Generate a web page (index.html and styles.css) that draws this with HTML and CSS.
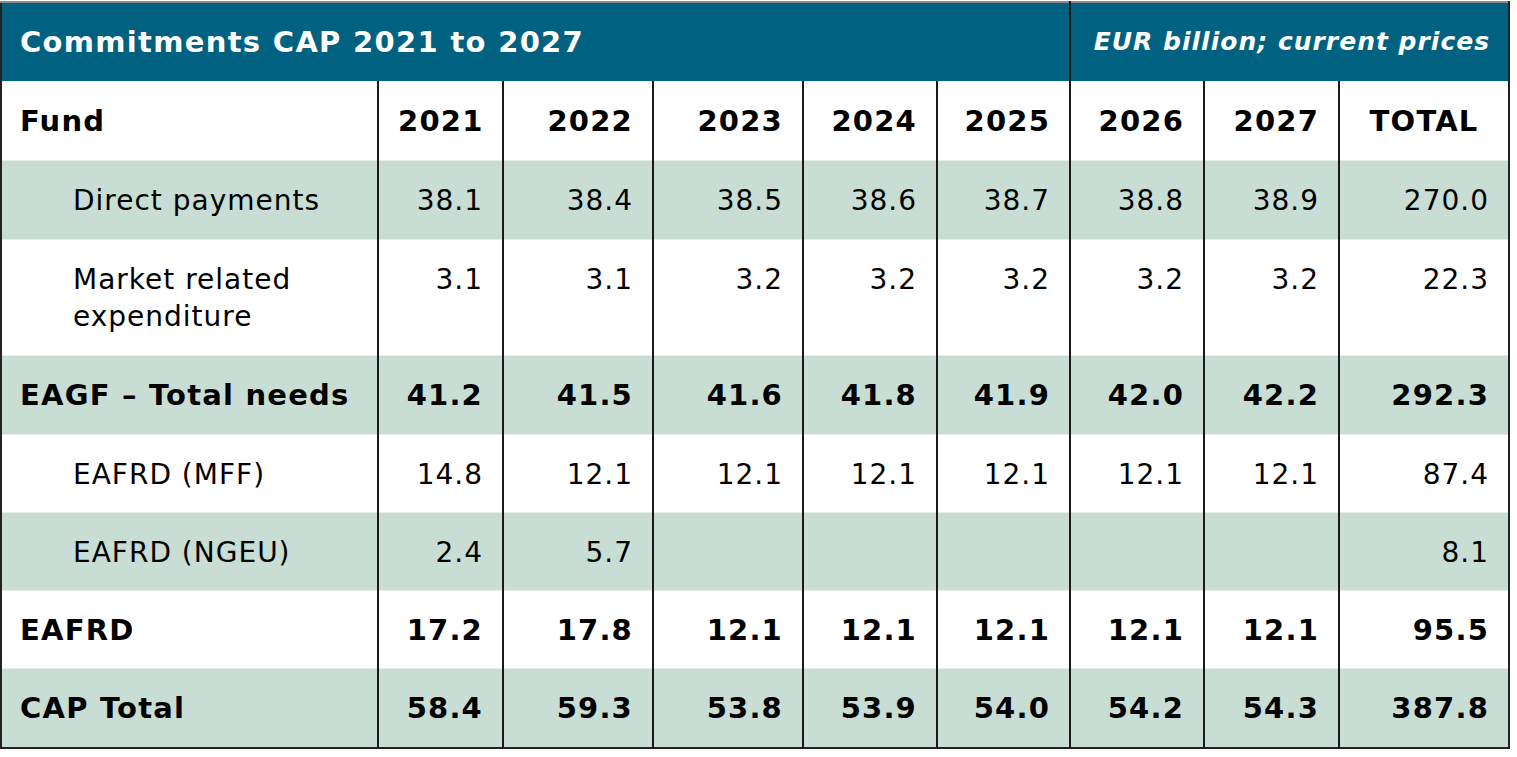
FILE: index.html
```html
<!DOCTYPE html>
<html>
<head>
<meta charset="utf-8">
<link rel="stylesheet" href="styles.css">
</head>
<body>
<table class="cap">
  <colgroup>
    <col class="c-fund"><col class="c-21"><col class="c-22"><col class="c-23"><col class="c-24"><col class="c-25"><col class="c-26"><col class="c-27"><col class="c-tot">
  </colgroup>
  <thead>
    <tr class="title-row">
      <th colspan="6" class="title">Commitments CAP 2021 to 2027</th>
      <th colspan="3" class="unit">EUR billion; current prices</th>
    </tr>
  </thead>
  <tbody>
    <tr class="head bold">
      <td class="label">Fund</td><td class="num">2021</td><td class="num">2022</td><td class="num">2023</td><td class="num">2024</td><td class="num">2025</td><td class="num">2026</td><td class="num">2027</td><td class="num center">TOTAL</td>
    </tr>
    <tr class="green">
      <td class="label indent">Direct payments</td><td class="num">38.1</td><td class="num">38.4</td><td class="num">38.5</td><td class="num">38.6</td><td class="num">38.7</td><td class="num">38.8</td><td class="num">38.9</td><td class="num">270.0</td>
    </tr>
    <tr>
      <td class="label indent">Market related<br>expenditure</td><td class="num">3.1</td><td class="num">3.1</td><td class="num">3.2</td><td class="num">3.2</td><td class="num">3.2</td><td class="num">3.2</td><td class="num">3.2</td><td class="num">22.3</td>
    </tr>
    <tr class="green bold">
      <td class="label">EAGF – Total needs</td><td class="num">41.2</td><td class="num">41.5</td><td class="num">41.6</td><td class="num">41.8</td><td class="num">41.9</td><td class="num">42.0</td><td class="num">42.2</td><td class="num">292.3</td>
    </tr>
    <tr class="tight">
      <td class="label indent">EAFRD (MFF)</td><td class="num">14.8</td><td class="num">12.1</td><td class="num">12.1</td><td class="num">12.1</td><td class="num">12.1</td><td class="num">12.1</td><td class="num">12.1</td><td class="num">87.4</td>
    </tr>
    <tr class="green tight">
      <td class="label indent">EAFRD (NGEU)</td><td class="num">2.4</td><td class="num">5.7</td><td class="num"></td><td class="num"></td><td class="num"></td><td class="num"></td><td class="num"></td><td class="num">8.1</td>
    </tr>
    <tr class="bold tight">
      <td class="label">EAFRD</td><td class="num">17.2</td><td class="num">17.8</td><td class="num">12.1</td><td class="num">12.1</td><td class="num">12.1</td><td class="num">12.1</td><td class="num">12.1</td><td class="num">95.5</td>
    </tr>
    <tr class="green bold">
      <td class="label">CAP Total</td><td class="num">58.4</td><td class="num">59.3</td><td class="num">53.8</td><td class="num">53.9</td><td class="num">54.0</td><td class="num">54.2</td><td class="num">54.3</td><td class="num">387.8</td>
    </tr>
  </tbody>
</table>
</body>
</html>
```

FILE: styles.css
```css
html, body {
  margin: 0;
  padding: 0;
  background: #ffffff;
}

body {
  padding-top: 1px;
  font-family: "DejaVu Sans", Verdana, sans-serif;
  font-size: 28px;
  letter-spacing: 1px;
  color: #000000;
}

.cap {
  border-collapse: collapse;
  table-layout: fixed;
  width: 1509px;
  border: 2px solid #222222;
  border-top: 2px solid #8a8a8a;
}

.c-fund { width: 377px; }
.c-21 { width: 125px; }
.c-22 { width: 150px; }
.c-23 { width: 150px; }
.c-24 { width: 134px; }
.c-25 { width: 133px; }
.c-26 { width: 134px; }
.c-27 { width: 135px; }
.c-tot { width: 170px; }

.title-row th {
  background: #006180;
  color: #ffffff;
  font-weight: bold;
  height: 79px;
  padding: 0 18px 0 18px;
  box-sizing: border-box;
  vertical-align: middle;
  white-space: nowrap;
}

.title {
  text-align: left;
  font-size: 29px;
  letter-spacing: 1.3px;
  border-right: 2px solid #1a1a1a;
}

.unit {
  text-align: right;
  font-style: italic;
  font-size: 25px;
  letter-spacing: 1px;
}

tbody td {
  line-height: 37px;
  padding: 21px 19px 20px 19px;
  vertical-align: top;
  border-left: 2px solid #1a1a1a;
  border-top: 1px solid #e6eeea;
}

tbody .tight td {
  padding-bottom: 19px;
}

tbody td.label {
  padding-left: 18px;
  border-left: none;
  white-space: nowrap;
}

tbody td.indent {
  padding-left: 71px;
}

.num {
  text-align: right;
  white-space: nowrap;
}

.center {
  text-align: center;
}

.bold td {
  font-weight: bold;
  font-size: 29px;
  letter-spacing: 1.2px;
}

.green td {
  background: #c8ded5;
}
```
